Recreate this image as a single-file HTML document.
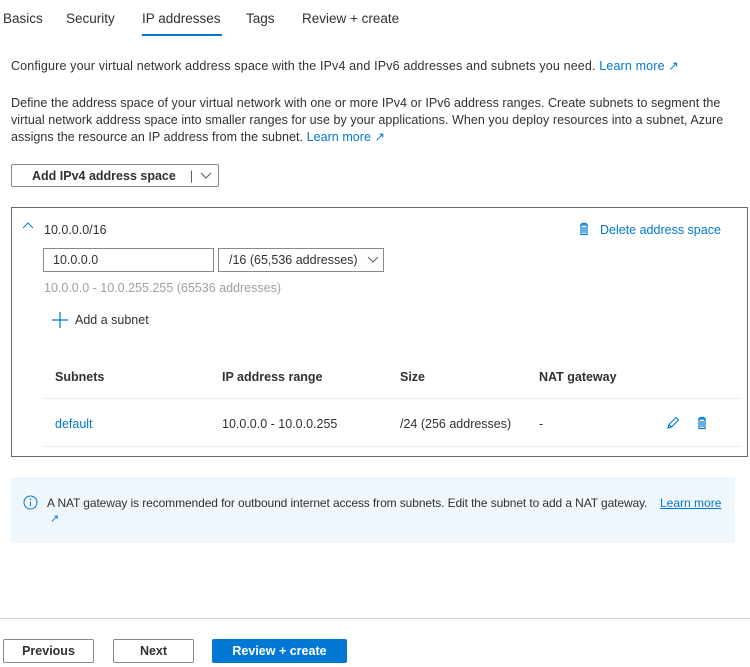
<!DOCTYPE html>
<html><head><meta charset="utf-8"><style>
*{margin:0;padding:0;box-sizing:border-box}
body{width:750px;height:667px;background:#fff;font-family:"Liberation Sans",sans-serif;color:#323130;position:relative;overflow:hidden;font-size:12.5px}
.a{position:absolute;white-space:nowrap}
.l{color:#0078d4}
.tab{font-size:13.5px;top:11px;color:#323130}
.btn{position:absolute;border:1px solid #8a8886;background:#fff;font-weight:bold;font-size:12.5px;display:flex;align-items:center;justify-content:center;border-radius:2px}
.in{position:absolute;border:1px solid #8a8886;height:24px;padding-left:9px;display:flex;align-items:center;font-size:12.5px}
.th{font-weight:bold;font-size:12.5px;top:370px}
</style></head><body>
<div class="a tab" style="left:3px">Basics</div>
<div class="a tab" style="left:66px">Security</div>
<div class="a tab" style="left:142px">IP addresses</div>
<div class="a" style="left:142px;top:34px;width:80px;height:2px;background:#0078d4"></div>
<div class="a tab" style="left:246px">Tags</div>
<div class="a tab" style="left:302px">Review + create</div>

<div class="a" style="left:11px;top:58px;letter-spacing:0.15px">Configure your virtual network address space with the IPv4 and IPv6 addresses and subnets you need. <span class="l">Learn more ↗</span></div>
<div class="a" style="left:11px;top:95px;line-height:17px;white-space:normal;width:732px;letter-spacing:0.05px">Define the address space of your virtual network with one or more IPv4 or IPv6 address ranges. Create subnets to segment the virtual network address space into smaller ranges for use by your applications. When you deploy resources into a subnet, Azure assigns the resource an IP address from the subnet. <span class="l">Learn more ↗</span></div>

<div class="btn" style="left:11px;top:164px;width:208px;height:23px;justify-content:flex-start;padding-left:20px">Add IPv4 address space <span style="font-weight:normal;margin-left:14px;color:#605e5c">|</span><svg width="14" height="10" style="margin-left:6px"><path d="M2 2l5 5 5-5" fill="none" stroke="#605e5c" stroke-width="1"/></svg></div>

<div class="a" style="left:11px;top:207px;width:737px;height:250px;border:1px solid #6b6b6b"></div>
<svg class="a" style="left:22px;top:222px" width="12" height="8"><path d="M1 6l5-5 5 5" fill="none" stroke="#0078d4" stroke-width="1"/></svg>
<div class="a" style="left:44px;top:223px">10.0.0.0/16</div>
<svg class="a" style="left:578px;top:222px" width="12" height="14"><path d="M2 3h8M4 3V1.5h4V3M3 3v9.5h6V3M5 5v6M7 5v6" fill="none" stroke="#0078d4" stroke-width="1.2"/></svg>
<div class="a l" style="left:600px;top:223px">Delete address space</div>
<div class="in" style="left:43px;top:248px;width:171px">10.0.0.0</div>
<div class="in" style="left:218px;top:248px;width:166px;padding-left:10px">/16 (65,536 addresses)<svg width="14" height="10" style="margin-left:8px"><path d="M2 2l5 5 5-5" fill="none" stroke="#605e5c" stroke-width="1"/></svg></div>
<div class="a" style="left:44px;top:281px;color:#a19f9d">10.0.0.0 - 10.0.255.255 (65536 addresses)</div>
<svg class="a" style="left:52px;top:312px" width="16" height="16"><path d="M8 0v16M0 8h16" stroke="#0078d4" stroke-width="1.2"/></svg>
<div class="a" style="left:75px;top:313px">Add a subnet</div>

<div class="a th" style="left:55px">Subnets</div>
<div class="a th" style="left:222px">IP address range</div>
<div class="a th" style="left:400px">Size</div>
<div class="a th" style="left:539px">NAT gateway</div>
<div class="a" style="left:43px;top:398px;width:698px;height:1px;background:#edebe9"></div>
<div class="a l" style="left:55px;top:417px">default</div>
<div class="a" style="left:222px;top:417px">10.0.0.0 - 10.0.0.255</div>
<div class="a" style="left:400px;top:417px">/24 (256 addresses)</div>
<div class="a" style="left:539px;top:417px">-</div>
<svg class="a" style="left:666px;top:416px" width="14" height="14"><path d="M2 12l1-3.5 7-7 2.5 2.5-7 7zM3 8.5l2.5 2.5" fill="none" stroke="#0078d4" stroke-width="1.1"/></svg>
<svg class="a" style="left:696px;top:416px" width="12" height="14"><path d="M2 3h8M4 3V1.5h4V3M3 3v9.5h6V3M5 5v6M7 5v6" fill="none" stroke="#0078d4" stroke-width="1.2"/></svg>
<div class="a" style="left:43px;top:446px;width:698px;height:1px;background:#edebe9"></div>

<div class="a" style="left:11px;top:477px;width:724px;height:66px;background:#eff6fc"></div>
<svg class="a" style="left:23px;top:495px" width="15" height="15"><circle cx="7.5" cy="7.5" r="6.5" fill="none" stroke="#0078d4"/><path d="M7.5 6.5v4.5" stroke="#0078d4"/><circle cx="7.5" cy="4.3" r=".8" fill="#0078d4"/></svg>
<div class="a" style="left:47px;top:496px;font-size:12px;letter-spacing:-0.1px">A NAT gateway is recommended for outbound internet access from subnets. Edit the subnet to add a NAT gateway.</div>
<div class="a l" style="left:660px;top:496px;font-size:12px;text-decoration:underline">Learn more</div>
<div class="a l" style="left:50px;top:512px;font-size:11px">↗</div>

<div class="a" style="left:0;top:618px;width:750px;height:1px;background:#d2d0ce"></div>
<div class="btn" style="left:3px;top:639px;width:91px;height:24px">Previous</div>
<div class="btn" style="left:113px;top:639px;width:81px;height:24px">Next</div>
<div class="btn" style="left:212px;top:639px;width:135px;height:24px;background:#0078d4;border-color:#0078d4;color:#fff">Review + create</div>
</body></html>
